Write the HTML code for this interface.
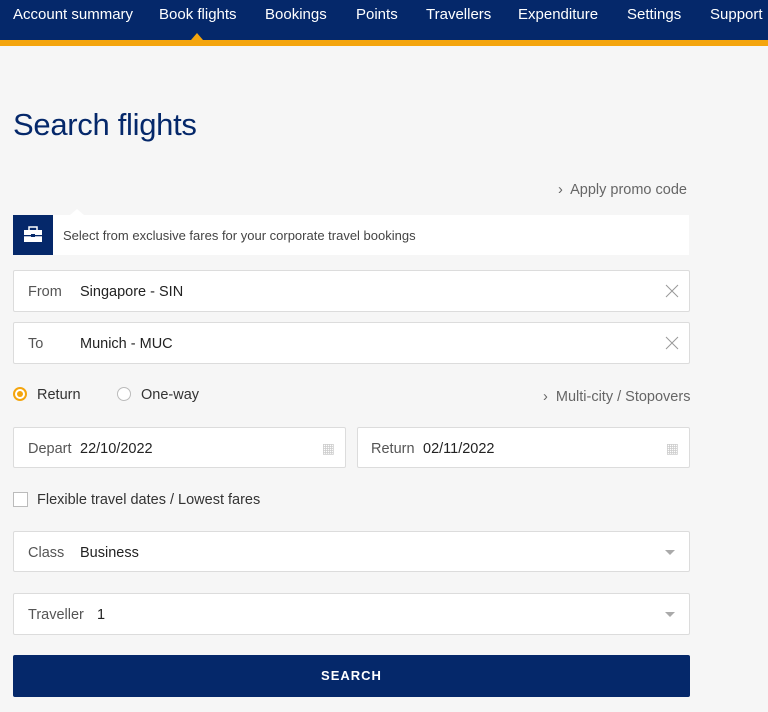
<!DOCTYPE html><html><head><style>
body{margin:0;width:768px;height:712px;background:#f6f6f6;font-family:"Liberation Sans",sans-serif;position:relative;overflow:hidden;color:#333}
.nav{position:absolute;left:0;top:0;width:768px;height:40px;background:#05286a;border-bottom:6px solid #f4a50e}
.nav span{position:absolute;top:6px;color:#fff;font-size:15px}
.a{position:absolute}
.box{position:absolute;background:#fff;border:1px solid #dcdcdc;border-radius:2px;box-sizing:border-box;font-size:14.5px}
.lb{position:absolute;color:#555;top:13px}
.v{position:absolute;color:#222;top:13px}
.x{position:absolute;right:10px;top:13px}
</style></head><body>
<div class="nav">
<span style="left:13px">Account summary</span><span style="left:159px">Book flights</span><span style="left:265px">Bookings</span><span style="left:356px">Points</span><span style="left:426px">Travellers</span><span style="left:518px">Expenditure</span><span style="left:627px">Settings</span><span style="left:710px">Support</span>
<div class="a" style="left:191px;top:33px;width:0;height:0;border-left:6px solid transparent;border-right:6px solid transparent;border-bottom:7px solid #f4a50e"></div>
</div>
<div class="a" style="left:13px;top:107px;font-size:31px;color:#05286a;letter-spacing:-0.3px">Search flights</div>
<div class="a" style="left:558px;top:182px;font-size:14.5px;color:#666">›&nbsp; Apply promo code</div>
<div class="a" style="left:13px;top:215px;width:676px;height:40px;background:#fff"></div>
<div class="a" style="left:70px;top:209px;width:0;height:0;border-left:7px solid transparent;border-right:7px solid transparent;border-bottom:6px solid #fff"></div>
<div class="a" style="left:13px;top:215px;width:40px;height:40px;background:#05286a">
<svg width="40" height="40"><rect x="11" y="15" width="18" height="12" fill="#fff"/><rect x="16" y="12" width="8" height="4" fill="none" stroke="#fff" stroke-width="1.5"/><rect x="11" y="20" width="18" height="1.3" fill="#05286a"/><rect x="18" y="19" width="4" height="3" fill="#05286a"/></svg></div>
<div class="a" style="left:63px;top:228px;font-size:13px;color:#444">Select from exclusive fares for your corporate travel bookings</div>
<div class="box" style="left:13px;top:270px;width:677px;height:42px"><span class="lb" style="left:14px">From</span><span class="v" style="left:66px">Singapore - SIN</span><svg class="x" width="14" height="14"><path d="M1 1L13 13M13 1L1 13" stroke="#999" stroke-width="1"/></svg></div>
<div class="box" style="left:13px;top:322px;width:677px;height:42px"><span class="lb" style="left:14px">To</span><span class="v" style="left:66px">Munich - MUC</span><svg class="x" width="14" height="14"><path d="M1 1L13 13M13 1L1 13" stroke="#999" stroke-width="1"/></svg></div>
<div class="a" style="left:13px;top:387px;width:10px;height:10px;border:2px solid #f4a50e;border-radius:50%;background:#fff"><div style="margin:2px;width:6px;height:6px;border-radius:50%;background:#f4a50e"></div></div>
<div class="a" style="left:37px;top:387px;font-size:14.5px">Return</div>
<div class="a" style="left:117px;top:387px;width:12px;height:12px;border:1px solid #bbb;border-radius:50%;background:#fff"></div>
<div class="a" style="left:141px;top:387px;font-size:14.5px">One-way</div>
<div class="a" style="left:543px;top:389px;font-size:14.5px;color:#666">›&nbsp; Multi-city / Stopovers</div>
<div class="box" style="left:13px;top:427px;width:333px;height:41px"><span class="lb" style="left:14px">Depart</span><span class="v" style="left:66px">22/10/2022</span><span class="a" style="right:10px;top:12px;color:#ccc;font-size:14px">▦</span></div>
<div class="box" style="left:357px;top:427px;width:333px;height:41px"><span class="lb" style="left:13px">Return</span><span class="v" style="left:65px">02/11/2022</span><span class="a" style="right:10px;top:12px;color:#ccc;font-size:14px">▦</span></div>
<div class="a" style="left:13px;top:492px;width:13px;height:13px;border:1px solid #bbb;background:#fff"></div>
<div class="a" style="left:37px;top:492px;font-size:14.5px">Flexible travel dates / Lowest fares</div>
<div class="box" style="left:13px;top:531px;width:677px;height:41px"><span class="lb" style="left:14px">Class</span><span class="v" style="left:66px">Business</span><span class="a" style="right:14px;top:18px;border-left:5px solid transparent;border-right:5px solid transparent;border-top:5px solid #aaa"></span></div>
<div class="box" style="left:13px;top:593px;width:677px;height:42px"><span class="lb" style="left:14px">Traveller</span><span class="v" style="left:83px">1</span><span class="a" style="right:14px;top:18px;border-left:5px solid transparent;border-right:5px solid transparent;border-top:5px solid #aaa"></span></div>
<div class="a" style="left:13px;top:655px;width:677px;height:42px;background:#05286a;border-radius:2px;color:#fff;font-weight:bold;font-size:13px;letter-spacing:1px;text-align:center;line-height:42px">SEARCH</div>
</body></html>
